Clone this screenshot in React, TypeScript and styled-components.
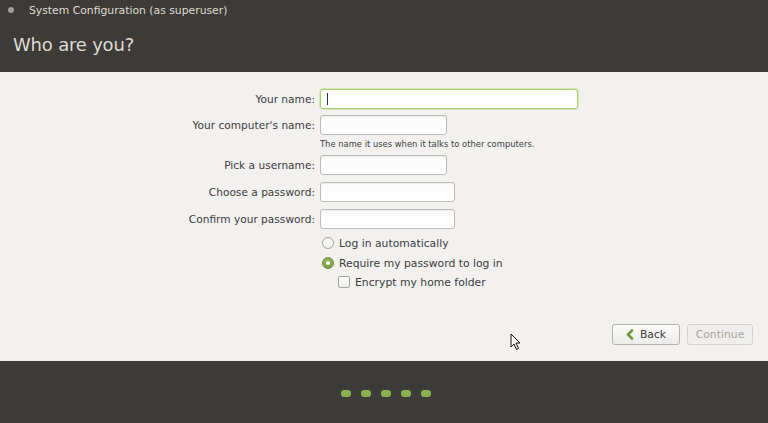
import React from "react";
import styled, { createGlobalStyle } from "styled-components";

const Global = createGlobalStyle`
  html, body { margin: 0; padding: 0; }
  body { width: 768px; height: 423px; overflow: hidden; background: #f2f1f0; font-family: "DejaVu Sans", sans-serif; }
  * { box-sizing: border-box; }
`;

const Page = styled.div`
  width: 768px;
  height: 423px;
  display: flex;
  flex-direction: column;
  position: relative;
`;

const Header = styled.div`
  height: 72px;
  background: #3c3b37;
  display: flex;
  flex-direction: column;
`;

const TitleBar = styled.div`
  height: 20px;
  display: flex;
  align-items: center;
  padding-left: 8px;
  gap: 15px;
  color: #dfdbd2;
  font-size: 10.8px;
  font-family: "DejaVu Sans", sans-serif;
`;

const WinDot = styled.span`
  width: 6px;
  height: 6px;
  border-radius: 50%;
  background: #a09e98;
`;

const Heading = styled.h1`
  margin: 14px 0 0 13px;
  font-weight: normal;
  font-size: 18px;
  color: #dcdad5;
  font-family: "DejaVu Sans", sans-serif;
  letter-spacing: -0.2px;
`;

const Content = styled.div`
  flex: 1;
  background: #f2f1f0;
  display: flex;
  flex-direction: column;
  padding-top: 17px;
`;

const Form = styled.div`
  display: grid;
  grid-template-columns: 320px 1fr;
  align-items: center;
`;

const Label = styled.label<{ $mt?: number }>`
  grid-column: 1;
  justify-self: end;
  padding-right: 5px;
  font-size: 10.6px;
  color: #3c3c3c;
  margin-top: ${(p) => p.$mt ?? 0}px;
`;

const Input = styled.div<{ $w: number; $focus?: boolean; $mt?: number }>`
  grid-column: 2;
  width: ${(p) => p.$w}px;
  height: 20px;
  border-radius: 3px;
  border: 1px solid ${(p) => (p.$focus ? "#a8d26e" : "#bcbab5")};
  box-shadow: ${(p) => (p.$focus ? "0 0 0 1px #d3e8b6" : "inset 0 1px 1px rgba(0,0,0,0.06)")};
  background: linear-gradient(#fbfbfb, #ffffff);
  margin-top: ${(p) => p.$mt ?? 0}px;
  display: flex;
  align-items: center;
  padding-left: 6px;
`;

const Caret = styled.span`
  width: 1px;
  height: 12px;
  background: #333;
`;

const Hint = styled.div`
  grid-column: 2;
  font-size: 8.4px;
  color: #3c3c3c;
  margin-top: 4px;
  height: 11px;
  line-height: 11px;
`;

const OptionRow = styled.div<{ $mt: number; $indent?: number }>`
  grid-column: 2;
  display: flex;
  align-items: center;
  gap: 5px;
  margin-top: ${(p) => p.$mt}px;
  padding-left: ${(p) => 2 + (p.$indent ?? 0)}px;
  font-size: 10.8px;
  color: #3c3c3c;
  height: 16px;
`;

const Radio = styled.span<{ $on?: boolean }>`
  width: 12px;
  height: 12px;
  border-radius: 50%;
  border: 1px solid ${(p) => (p.$on ? "#6f8f3e" : "#a6a49f")};
  background: ${(p) => (p.$on ? "linear-gradient(#93b35d, #7c9c46)" : "linear-gradient(#ffffff, #eeeeec)")};
  display: flex;
  align-items: center;
  justify-content: center;
  &::after {
    content: "";
    width: 4px;
    height: 4px;
    border-radius: 50%;
    background: #ffffff;
    display: ${(p) => (p.$on ? "block" : "none")};
  }
`;

const Check = styled.span`
  width: 12px;
  height: 12px;
  border-radius: 2px;
  border: 1px solid #a6a49f;
  background: linear-gradient(#ffffff, #eeeeec);
`;

const Spacer = styled.div`
  flex: 1;
`;

const Buttons = styled.div`
  display: flex;
  justify-content: flex-end;
  gap: 7px;
  padding: 0 15px 16px 0;
`;

const Button = styled.div<{ $disabled?: boolean }>`
  height: 21px;
  border-radius: 3px;
  border: 1px solid ${(p) => (p.$disabled ? "#d3d1cc" : "#b3b1ac")};
  background: ${(p) => (p.$disabled ? "#efeeec" : "linear-gradient(#fbfbfa, #ecebe9)")};
  color: ${(p) => (p.$disabled ? "#a9a7a2" : "#3c3c3c")};
  font-size: 10.8px;
  display: flex;
  align-items: center;
  justify-content: center;
  gap: 6px;
  width: ${(p) => (p.$disabled ? 66 : 68)}px;
`;

const Footer = styled.div`
  height: 62px;
  background: #3c3b37;
  display: flex;
  justify-content: center;
  align-items: center;
  gap: 10px;
  padding-left: 3px;
  padding-top: 3px;
`;

const Step = styled.span`
  width: 10px;
  height: 7px;
  border-radius: 3px;
  background: #8bb04f;
`;

const Pointer = styled.svg`
  position: absolute;
  left: 510px;
  top: 333px;
`;

export default function App() {
  return (
    <Page>
      <Global />
      <Header>
        <TitleBar>
          <WinDot />
          <span>System Configuration (as superuser)</span>
        </TitleBar>
        <Heading>Who are you?</Heading>
      </Header>
      <Content>
        <Form>
          <Label>Your name:</Label>
          <Input $w={258} $focus>
            <Caret />
          </Input>
          <Label $mt={6}>Your computer's name:</Label>
          <Input $w={127} $mt={6} />
          <Hint>The name it uses when it talks to other computers.</Hint>
          <Label $mt={5}>Pick a username:</Label>
          <Input $w={127} $mt={5} />
          <Label $mt={7}>Choose a password:</Label>
          <Input $w={135} $mt={7} />
          <Label $mt={7}>Confirm your password:</Label>
          <Input $w={135} $mt={7} />
          <OptionRow $mt={6}>
            <Radio />
            <span>Log in automatically</span>
          </OptionRow>
          <OptionRow $mt={4}>
            <Radio $on />
            <span>Require my password to log in</span>
          </OptionRow>
          <OptionRow $mt={3} $indent={16}>
            <Check />
            <span>Encrypt my home folder</span>
          </OptionRow>
        </Form>
        <Spacer />
        <Buttons>
          <Button>
            <svg width="8" height="11" viewBox="0 0 8 11">
              <path d="M6 1.5 L2 5.5 L6 9.5" fill="none" stroke="#6f9a35" strokeWidth="2.6" strokeLinecap="round" strokeLinejoin="round" />
            </svg>
            <span>Back</span>
          </Button>
          <Button $disabled>Continue</Button>
        </Buttons>
      </Content>
      <Footer>
        <Step />
        <Step />
        <Step />
        <Step />
        <Step />
      </Footer>
      <Pointer width="12" height="18" viewBox="0 0 12 18">
        <path d="M1 1 L1 14 L4 11 L6.5 16.5 L8.5 15.5 L6 10 L10 10 Z" fill="#ffffff" stroke="#111" strokeWidth="1" strokeLinejoin="round" />
      </Pointer>
    </Page>
  );
}
